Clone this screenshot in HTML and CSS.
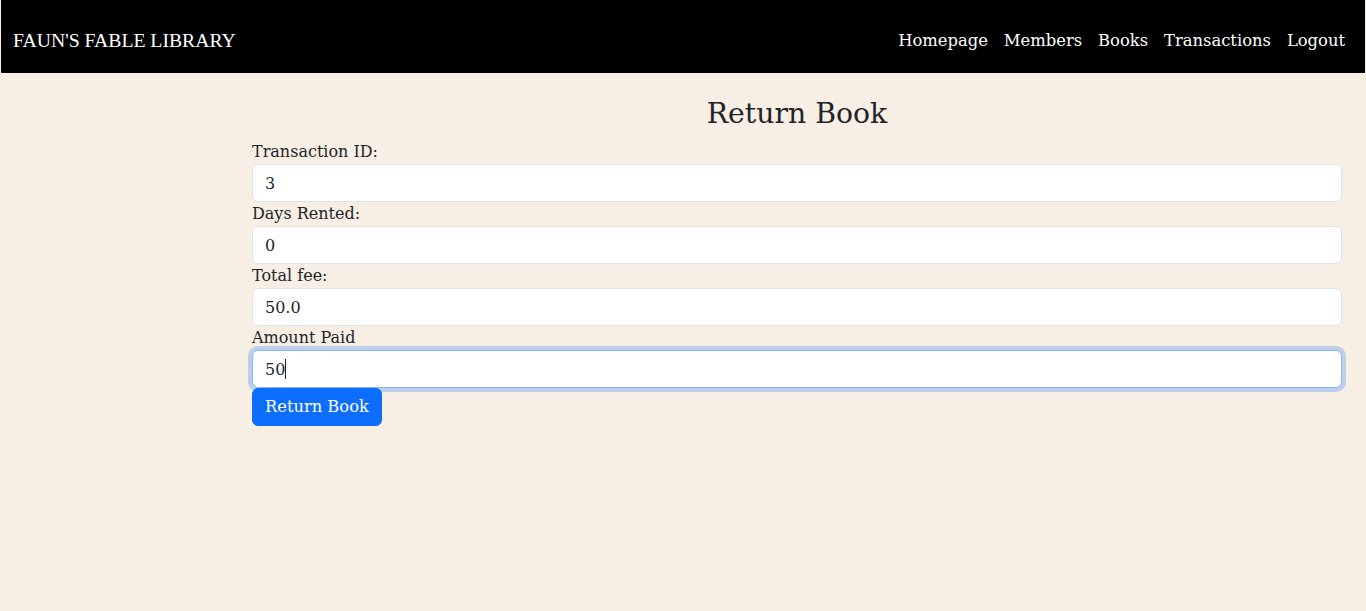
FILE: index.html
```html
<!DOCTYPE html>
<html lang="en">
<head>
<meta charset="utf-8">
<title>Return Book</title>
<link rel="stylesheet" href="styles.css">
</head>
<body>
<nav class="navbar">
  <a class="brand" href="#">FAUN'S FABLE LIBRARY</a>
  <ul class="nav-links">
    <li><a href="#">Homepage</a></li>
    <li><a href="#">Members</a></li>
    <li><a href="#">Books</a></li>
    <li><a href="#">Transactions</a></li>
    <li><a href="#">Logout</a></li>
  </ul>
</nav>
<main class="content">
  <h2 class="title">Return Book</h2>
  <form class="form">
    <label class="label" for="tid">Transaction ID:</label>
    <input class="input" id="tid" type="text" value="3">
    <label class="label" for="days">Days Rented:</label>
    <input class="input" id="days" type="text" value="0">
    <label class="label" for="fee">Total fee:</label>
    <input class="input" id="fee" type="text" value="50.0">
    <label class="label" for="paid">Amount Paid</label>
    <div class="input-wrap">
      <input class="input focused" id="paid" type="text" value="50">
      <span class="caret"></span>
    </div>
    <button class="btn" type="button">Return Book</button>
  </form>
</main>
</body>
</html>
```
FILE: styles.css
```css
* { box-sizing: border-box; }
html, body { margin: 0; padding: 0; }
body {
  background: #f8efe4;
  font-family: "DejaVu Serif", "Liberation Serif", serif;
  color: #212529;
  font-size: 16px;
  line-height: 1.5;
}
.navbar {
  height: 73px;
  margin: 0 1px;
  background: #000;
  display: flex;
  align-items: center;
  justify-content: space-between;
  padding: 9px 12px 0 12px;
}
.brand {
  font-family: "Liberation Serif", serif;
  font-size: 19.7px;
  color: #fff;
  text-decoration: none;
}
.nav-links {
  list-style: none;
  margin: 0;
  padding: 0;
  display: flex;
}
.nav-links a {
  display: block;
  color: #fff;
  text-decoration: none;
  padding: 0 8px;
  font-size: 16.35px;
}
.content {
  width: 1090px;
  margin: 0 0 0 252px;
  padding-top: 24px;
}
.title {
  margin: 0 0 9px 0;
  font-size: 28.3px;
  line-height: 34px;
  font-weight: 400;
  text-align: center;
}
.form { display: flex; flex-direction: column; align-items: flex-start; }
.label { display: block; line-height: 24px; }
.input-wrap { position: relative; width: 100%; }
.input {
  display: block;
  width: 100%;
  height: 38px;
  padding: 6px 12px;
  font-family: inherit;
  font-size: 16px;
  color: #212529;
  background: #fff;
  border: 1px solid #dee2e6;
  border-radius: 6px;
  outline: none;
}
.input.focused {
  border-color: #86b7fe;
  box-shadow: 0 0 0 4px rgba(13, 110, 253, 0.25);
}
.caret {
  position: absolute;
  left: 33px;
  top: 9px;
  width: 1px;
  height: 20px;
  background: #212529;
}
.btn {
  height: 38px;
  padding: 6px 12px;
  font-family: inherit;
  font-size: 16.3px;
  line-height: 24px;
  color: #fff;
  background: #0d6efd;
  border: 1px solid #0d6efd;
  border-radius: 6px;
}
```
